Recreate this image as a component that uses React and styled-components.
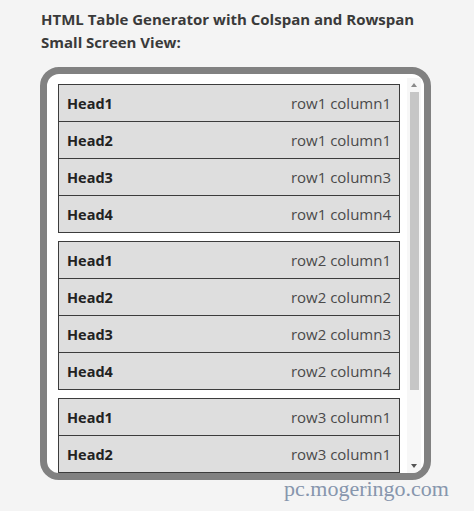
import React from "react";
import styled, { createGlobalStyle } from "styled-components";

const GlobalStyle = createGlobalStyle`
  html, body {
    margin: 0;
    padding: 0;
    background: #f4f4f4;
  }
  body {
    font-family: "Open Sans", "Liberation Sans", sans-serif;
  }
`;

const Page = styled.div`
  position: relative;
  width: 474px;
  height: 511px;
  padding: 8px 0 0 40px;
  box-sizing: border-box;
  overflow: hidden;
`;

const Title = styled.h2`
  margin: 0 0 13px 1px;
  font-size: 15px;
  line-height: 23px;
  font-weight: 700;
  color: #3a3a3a;
`;

const Frame = styled.div`
  width: 391px;
  height: 413px;
  box-sizing: border-box;
  border: 7px solid #818181;
  border-radius: 19px;
  background: #ffffff;
  display: flex;
  padding: 4px 3px 0 11px;
  overflow: hidden;
`;

const Viewport = styled.div`
  flex: 1;
  overflow: hidden;
  padding-top: 6px;
  display: flex;
  flex-direction: column;
  gap: 8px;
`;

const Group = styled.div`
  border: 1px solid #3c3c3c;
  background: #dedede;
  flex-shrink: 0;
`;

const Row = styled.div`
  height: 36px;
  display: flex;
  align-items: center;
  justify-content: space-between;
  padding: 0 8px 0 8px;
  & + & {
    border-top: 1px solid #3c3c3c;
  }
`;

const Head = styled.span`
  font-weight: 700;
  font-size: 14.5px;
  color: #222;
`;

const Value = styled.span`
  font-size: 15px;
  color: #4a4a4a;
`;

const Scrollbar = styled.div`
  width: 14px;
  margin-left: 7px;
  display: flex;
  flex-direction: column;
  align-items: center;
  background: #f7f7f7;
`;

const Arrow = styled.div`
  height: 14px;
  display: flex;
  align-items: center;
  justify-content: center;
  &::before {
    content: "";
    border-left: 3px solid transparent;
    border-right: 3px solid transparent;
    ${(p) =>
      p.up
        ? "border-bottom: 4px solid #8a8a8a;"
        : "border-top: 4px solid #555;"}
  }
`;

const Track = styled.div`
  flex: 1;
  width: 100%;
  display: flex;
  justify-content: center;
`;

const Thumb = styled.div`
  width: 9px;
  height: 298px;
  background: #c6c6c6;
`;

const Watermark = styled.div`
  position: absolute;
  left: 284px;
  top: 476px;
  font-family: "Liberation Serif", "DejaVu Serif", serif;
  font-size: 22px;
  color: #8796ad;
`;

const groups = [
  ["row1 column1", "row1 column1", "row1 column3", "row1 column4"],
  ["row2 column1", "row2 column2", "row2 column3", "row2 column4"],
  ["row3 column1", "row3 column1", "row3 column3", "row3 column4"],
];

export default function App() {
  return (
    <Page>
      <GlobalStyle />
      <Title>
        HTML Table Generator with Colspan and Rowspan
        <br />
        Small Screen View:
      </Title>
      <Frame>
        <Viewport>
          {groups.map((values, g) => (
            <Group key={g}>
              {values.map((v, i) => (
                <Row key={i}>
                  <Head>Head{i + 1}</Head>
                  <Value>{v}</Value>
                </Row>
              ))}
            </Group>
          ))}
        </Viewport>
        <Scrollbar>
          <Arrow up />
          <Track>
            <Thumb />
          </Track>
          <Arrow />
        </Scrollbar>
      </Frame>
      <Watermark>pc.mogeringo.com</Watermark>
    </Page>
  );
}
